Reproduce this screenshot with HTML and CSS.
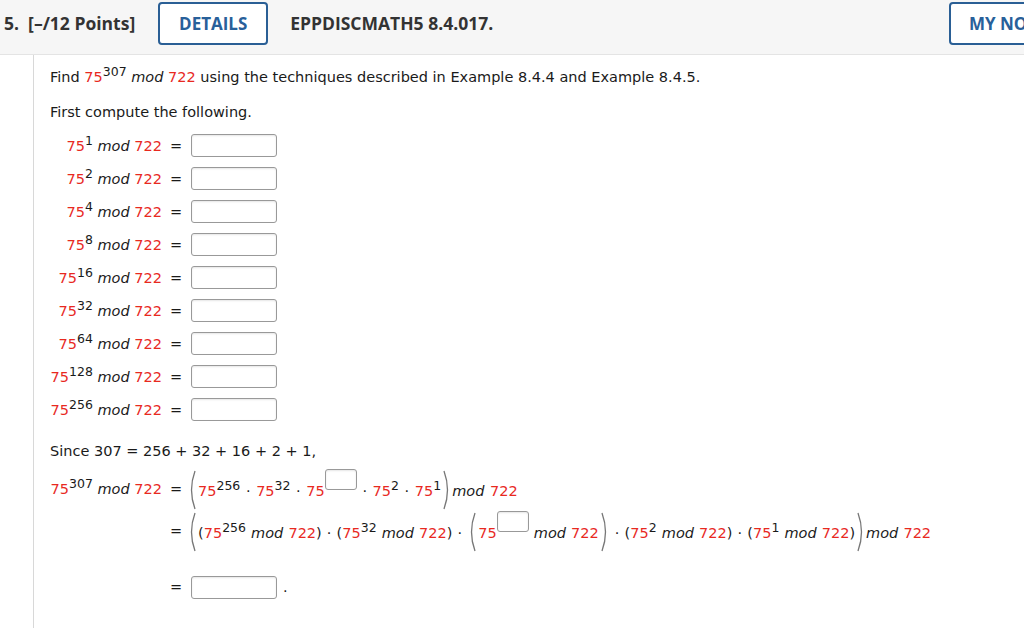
FILE: index.html
```html
<!DOCTYPE html>
<html>
<head>
    <meta charset="UTF-8">
    <title>EPPDISCMATH5 8.4.017.</title>
    <link rel="stylesheet" href="styles.css">
</head>

<body>
    <div class="cabecalho">
        <span class="pontos">5.&nbsp; [&ndash;/12 Points]</span>
        <button type="button" class="botaoDetalhes">DETAILS</button>
        <span class="codigo">EPPDISCMATH5 8.4.017.</span>
        <button type="button" class="botaoNotas">MY NOTES</button>
    </div>

    <div class="questao">
        <p class="enunciado">Find <span class="v">75<sup>307</sup></span> <i>mod</i> <span class="v">722</span> using the techniques described in Example 8.4.4 and Example 8.4.5.</p>

        <p class="enunciado">First compute the following.</p>

        <div class="tabela">
            <div class="esq"><span class="v">75<sup>1</sup></span> <i>mod</i> <span class="v">722</span></div><div class="igual">=</div><div><input type="text" class="caixa"></div>
            <div class="esq"><span class="v">75<sup>2</sup></span> <i>mod</i> <span class="v">722</span></div><div class="igual">=</div><div><input type="text" class="caixa"></div>
            <div class="esq"><span class="v">75<sup>4</sup></span> <i>mod</i> <span class="v">722</span></div><div class="igual">=</div><div><input type="text" class="caixa"></div>
            <div class="esq"><span class="v">75<sup>8</sup></span> <i>mod</i> <span class="v">722</span></div><div class="igual">=</div><div><input type="text" class="caixa"></div>
            <div class="esq"><span class="v">75<sup>16</sup></span> <i>mod</i> <span class="v">722</span></div><div class="igual">=</div><div><input type="text" class="caixa"></div>
            <div class="esq"><span class="v">75<sup>32</sup></span> <i>mod</i> <span class="v">722</span></div><div class="igual">=</div><div><input type="text" class="caixa"></div>
            <div class="esq"><span class="v">75<sup>64</sup></span> <i>mod</i> <span class="v">722</span></div><div class="igual">=</div><div><input type="text" class="caixa"></div>
            <div class="esq"><span class="v">75<sup>128</sup></span> <i>mod</i> <span class="v">722</span></div><div class="igual">=</div><div><input type="text" class="caixa"></div>
            <div class="esq"><span class="v">75<sup>256</sup></span> <i>mod</i> <span class="v">722</span></div><div class="igual">=</div><div><input type="text" class="caixa"></div>
        </div>

        <p class="enunciado desde">Since 307 = 256 + 32 + 16 + 2 + 1,</p>

        <div class="tabela equacao">
            <div class="esq"><span class="v">75<sup>307</sup></span> <i>mod</i> <span class="v">722</span></div>
            <div class="igual">=</div>
            <div class="dir">
                <svg class="parentese abre" width="10" height="40" viewBox="0 0 10 40"><path d="M8 1 Q1 20 8 39" fill="none" stroke="#777" stroke-width="1.3"/></svg><span class="v">75<sup>256</sup></span> &middot; <span class="v">75<sup>32</sup></span> &middot; <span class="v">75</span><span class="expCaixa"><input type="text" class="caixaPequena"></span> &middot; <span class="v">75<sup>2</sup></span> &middot; <span class="v">75<sup>1</sup></span><svg class="parentese fecha" width="10" height="40" viewBox="0 0 10 40"><path d="M2 1 Q9 20 2 39" fill="none" stroke="#777" stroke-width="1.3"/></svg><i>mod</i> <span class="v">722</span>
            </div>

            <div class="esq"></div>
            <div class="igual">=</div>
            <div class="dir longa">
                <svg class="parentese abre" width="10" height="40" viewBox="0 0 10 40"><path d="M8 1 Q1 20 8 39" fill="none" stroke="#777" stroke-width="1.3"/></svg>(<span class="v">75<sup>256</sup></span> <i>mod</i> <span class="v">722</span>) &middot; (<span class="v">75<sup>32</sup></span> <i>mod</i> <span class="v">722</span>) &middot; <svg class="parentese abre" width="10" height="40" viewBox="0 0 10 40"><path d="M8 1 Q1 20 8 39" fill="none" stroke="#777" stroke-width="1.3"/></svg><span class="v">75</span><span class="expCaixa"><input type="text" class="caixaPequena"></span> <i>mod</i> <span class="v">722</span><svg class="parentese fecha" width="10" height="40" viewBox="0 0 10 40"><path d="M2 1 Q9 20 2 39" fill="none" stroke="#777" stroke-width="1.3"/></svg> &middot; (<span class="v">75<sup>2</sup></span> <i>mod</i> <span class="v">722</span>) &middot; (<span class="v">75<sup>1</sup></span> <i>mod</i> <span class="v">722</span>)<svg class="parentese fecha" width="10" height="40" viewBox="0 0 10 40"><path d="M2 1 Q9 20 2 39" fill="none" stroke="#777" stroke-width="1.3"/></svg><i>mod</i> <span class="v">722</span>
            </div>

            <div class="esq"></div>
            <div class="igual">=</div>
            <div class="dir final"><input type="text" class="caixa"><span class="ponto">.</span></div>
        </div>
    </div>
</body>
</html>
```

FILE: styles.css
```css
body {
    margin: 0;
    font-family: "DejaVu Sans", Verdana, sans-serif;
    font-size: 14.5px;
    color: #1a1a1a; /*Quase preto*/
    background-color: #fff;
    overflow: hidden;
}

.cabecalho {
    display: flex;
    align-items: flex-start;
    height: 55px;
    box-sizing: border-box;
    padding: 2px 0 0 4px;
    background-color: #f6f6f6; /*Cinza bem claro*/
    border-bottom: 1px solid #e4e4e4;
    font-family: "Open Sans", sans-serif;
    font-weight: bold;
    font-size: 17.5px;
    line-height: 42px;
    color: #333;
    white-space: nowrap;
    overflow: hidden;
}

.cabecalho button {
    font-family: "Open Sans", sans-serif;
    font-weight: bold;
    font-size: 17px;
    color: #28609a; /*Azul*/
    background-color: #fff;
    border: 2px solid #2a5f95;
    border-radius: 4px;
    height: 43px;
    padding: 0 18px;
}

.pontos {
    margin-right: 23px;
}

.botaoDetalhes {
    width: 110px;
    margin-right: 22px;
}

.codigo {
    flex: 1;
}

.botaoNotas {
    flex-shrink: 0;
    width: 120px;
    margin-right: -45px;
    text-align: left;
}

.questao {
    margin-left: 33px;
    border-left: 1px solid #d8d8d8;
    padding: 5px 0 40px 16px;
    min-height: 600px;
}

.enunciado {
    margin: 0;
    line-height: 35px;
}

.v {
    color: #e8291f; /*Vermelho*/
}

sup {
    font-size: 12.5px;
    line-height: 0;
    vertical-align: 6px;
    color: #1a1a1a;
}

i {
    font-style: italic;
}

.tabela {
    display: grid;
    grid-template-columns: 116px 20px auto;
    grid-auto-rows: 33px;
    align-items: center;
    white-space: nowrap;
}

.esq {
    text-align: right;
    padding-right: 4px;
}

.igual {
    text-align: center;
}

.caixa {
    display: block;
    box-sizing: border-box;
    width: 86px;
    height: 23px;
    margin-left: 5px;
    border: 1px solid #999;
    border-radius: 3px;
    box-shadow: inset 0 1px 2px rgba(0, 0, 0, 0.1);
}

.tabela:not(.equacao) {
    margin-top: -1px;
}

.desde {
    margin-top: 8px;
}

.equacao {
    grid-template-rows: 40px 43px 70px;
}

.dir {
    white-space: nowrap;
    margin-left: 1px;
    word-spacing: 1px;
}

.longa {
    word-spacing: 0.5px;
}

.parentese {
    vertical-align: middle;
    margin-top: -4px;
}

.abre {
    margin-right: 1px;
}

.fecha {
    margin-left: 1px;
}

.expCaixa {
    display: inline-block;
    overflow: hidden;
    padding: 1px 0;
    vertical-align: 5px;
}

.caixaPequena {
    display: block;
    box-sizing: border-box;
    width: 32px;
    height: 21px;
    border: 1px solid #999;
    border-radius: 3px;
    box-shadow: inset 0 1px 2px rgba(0, 0, 0, 0.1);
}

.final {
    display: flex;
    align-items: center;
    word-spacing: 0;
}

.final .caixa {
    margin-left: 4px;
}

.ponto {
    margin-left: 6px;
}
```
